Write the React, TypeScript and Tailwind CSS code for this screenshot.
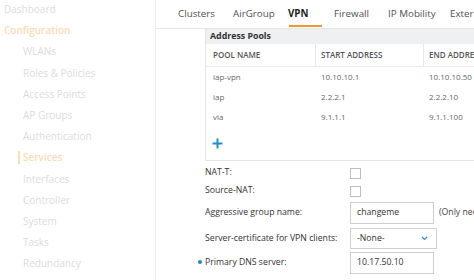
import React from 'react';

const subItems = ['WLANs', 'Roles & Policies', 'Access Points', 'AP Groups', 'Authentication'];
const subItems2 = ['Interfaces', 'Controller', 'System', 'Tasks', 'Redundancy'];
const tabs = [
  { t: 'Clusters', w: 'w-[55px]' },
  { t: 'AirGroup', w: 'w-[55px]' },
  { t: 'VPN', w: 'w-[46px]' },
  { t: 'Firewall', w: 'w-[54px]' },
  { t: 'IP Mobility', w: 'w-[62px]' },
  { t: 'External Services', w: 'w-[90px]' },
];
const pools = [
  { name: 'iap-vpn', start: '10.10.10.1', end: '10.10.10.50' },
  { name: 'iap', start: '2.2.2.1', end: '2.2.2.10' },
  { name: 'via', start: '9.1.1.1', end: '9.1.1.100' },
];

function Sidebar() {
  return (
    <div className="w-[156px] shrink-0 border-r border-[#ececec] bg-white text-[10px] text-[#dcdcdc] -mt-[1px]">
      <div className="h-[21.2px] leading-[21px] pl-[4px]">Dashboard</div>
      <div className="h-[21.2px] leading-[21px] pl-[4px] text-[#fbdcb6] font-semibold">Configuration</div>
      {subItems.map((s) => (
        <div key={s} className="h-[21.2px] leading-[21px] pl-[23px]">{s}</div>
      ))}
      <div className="h-[21.2px] leading-[21px] pl-[23px] relative text-[#fbdcb6] font-semibold">
        <span className="absolute left-[18px] top-[4px] h-[13px] w-[2px] bg-[#fbdcb6]" />
        Services
      </div>
      {subItems2.map((s) => (
        <div key={s} className="h-[21.2px] leading-[21px] pl-[23px]">{s}</div>
      ))}
    </div>
  );
}

function Tabs() {
  return (
    <div className="h-[29px] shrink-0 border-b border-[#e6e6e6] flex items-center pl-[22px] text-[9.8px] text-[#505050] whitespace-nowrap">
      {tabs.map(({ t, w }) => (
        <div key={t} className={`relative h-full flex items-center shrink-0 ${w} ${t === 'VPN' ? 'font-bold text-[#1e1e1e]' : ''}`}>
          {t}
          {t === 'VPN' && <span className="absolute left-[1px] bottom-[1px] h-[2px] w-[33px] bg-[#f0962e]" />}
        </div>
      ))}
    </div>
  );
}

function AddressPools() {
  return (
    <div className="w-[300px] border-l border-b border-[#e4e4e4] text-[8px] text-[#666]">
      <div className="h-[15px] bg-[#eef0f2] pl-[4px] flex items-center font-bold text-[8.8px] text-[#333]">Address Pools</div>
      <div className="flex h-[23px] border-b border-[#ececec] font-semibold text-[#555] whitespace-nowrap">
        <div className="w-[110px] border-r border-[#e8e8e8] pl-[7px] flex items-center">POOL NAME</div>
        <div className="w-[108px] border-r border-[#e8e8e8] pl-[5px] flex items-center">START ADDRESS</div>
        <div className="flex-1 pl-[5px] flex items-center">END ADDRESS</div>
      </div>
      {pools.map((p) => (
        <div key={p.name} className="flex h-[20px] items-center">
          <div className="w-[110px] pl-[7px]">{p.name}</div>
          <div className="w-[108px] pl-[5px]">{p.start}</div>
          <div className="flex-1 pl-[5px]">{p.end}</div>
        </div>
      ))}
      <div className="h-[33px] flex items-center pl-[6px]">
        <svg width="11" height="11" viewBox="0 0 11 11">
          <path d="M5.5 0.5v10M0.5 5.5h10" stroke="#1f8fd1" strokeWidth="2" />
        </svg>
      </div>
    </div>
  );
}

function Row({ label, dot, children, h }: { label: string; dot?: boolean; children?: React.ReactNode; h: string }) {
  return (
    <div className={`flex items-center whitespace-nowrap ${h}`}>
      <div className="w-[145px] shrink-0 relative text-[#333]">
        {dot && <span className="absolute -left-[7px] top-[4px] h-[4px] w-[4px] rounded-full bg-[#1e88c7]" />}
        {label}
      </div>
      {children}
    </div>
  );
}

function Form() {
  return (
    <div className="text-[8.7px] mt-[3px]">
      <Row label="NAT-T:" h="h-[18px]">
        <span className="shrink-0 w-[11px] h-[11px] border border-[#bdbdbd] bg-white" />
      </Row>
      <Row label="Source-NAT:" h="h-[18px]">
        <span className="shrink-0 w-[11px] h-[11px] border border-[#bdbdbd] bg-white" />
      </Row>
      <Row label="Aggressive group name:" h="h-[26px]">
        <div className="shrink-0 w-[84px] h-[22px] border border-[#cfcfcf] flex items-center pl-[6px] text-[#333]">changeme</div>
        <span className="ml-[5px] text-[#444]">(Only needed for IKEv1)</span>
      </Row>
      <Row label="Server-certificate for VPN clients:" h="h-[25px]">
        <div className="shrink-0 w-[87px] h-[21px] border border-[#cfcfcf] flex items-center justify-between pl-[6px] pr-[8px] text-[#333]">
          -None-
          <svg width="7" height="5" viewBox="0 0 7 5">
            <path d="M1 1l2.5 2.5L6 1" stroke="#3a8fd0" strokeWidth="1.2" fill="none" />
          </svg>
        </div>
      </Row>
      <Row label="Primary DNS server:" dot h="h-[24px]">
        <div className="shrink-0 w-[84px] h-[22px] border border-[#cfcfcf] flex items-center pl-[6px] text-[#333]">10.17.50.10</div>
      </Row>
      <div className="flex h-[10px] items-end">
        <div className="w-[145px] shrink-0" />
        <div className="shrink-0 w-[84px] h-[4px] border-t border-x border-[#cfcfcf] bg-[#f1f1f1]" />
      </div>
    </div>
  );
}

export default function App() {
  return (
    <div className="w-[474px] h-[280px] overflow-hidden flex bg-white" style={{ fontFamily: '"Open Sans", sans-serif' }}>
      <Sidebar />
      <div className="flex-1 flex flex-col min-w-0 overflow-hidden">
        <Tabs />
        <div className="pl-[49px] overflow-hidden">
          <AddressPools />
          <Form />
        </div>
      </div>
    </div>
  );
}
